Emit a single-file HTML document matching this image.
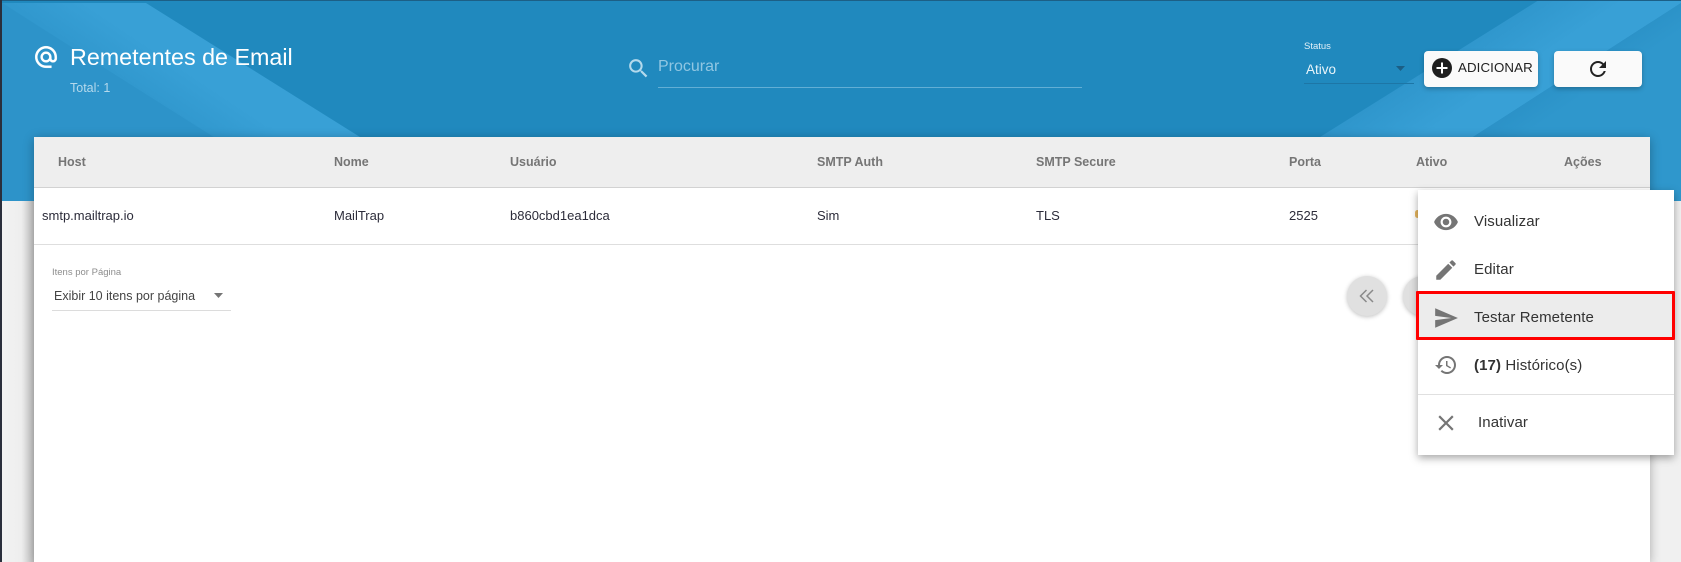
<!DOCTYPE html>
<html lang="pt"><head><meta charset="utf-8"><title>Remetentes de Email</title>
<style>
html,body{margin:0;padding:0;width:1681px;height:562px;overflow:hidden;background:#f0f0f0}
body{position:relative;font-family:"Liberation Sans",sans-serif;color:#333}
.t{position:absolute;white-space:nowrap;line-height:20px;height:20px}
.abs{position:absolute}
.th{font-size:12.5px;font-weight:700;color:#757575;top:152px}
.td{font-size:13px;color:#2c2c3a;top:206px}
.m{font-size:15px;color:#333;left:1474px;letter-spacing:.1px}
svg{position:absolute;display:block}
</style></head><body>
<svg style="left:0;top:0" width="1681" height="201" viewBox="0 0 1681 201">
<defs>
<linearGradient id="a" gradientUnits="userSpaceOnUse" x1="120" y1="85" x2="170" y2="10"><stop offset="0" stop-color="#3097cd"/><stop offset=".55" stop-color="#38a0d6"/><stop offset="1" stop-color="#38a0d6"/></linearGradient>
<linearGradient id="b" gradientUnits="userSpaceOnUse" x1="1420" y1="73" x2="1470" y2="148"><stop offset="0" stop-color="#2f96cc"/><stop offset=".6" stop-color="#38a0d6"/><stop offset="1" stop-color="#38a0d6"/></linearGradient>
<linearGradient id="c" gradientUnits="userSpaceOnUse" x1="1520" y1="95" x2="1560" y2="155"><stop offset="0" stop-color="#2a90c6"/><stop offset=".5" stop-color="#2f97cc"/></linearGradient>
</defs>
<rect width="1681" height="201" fill="#2089be"/>
<polygon points="0,0 0,201 320,201 2,3" fill="#2d93c9"/>
<polygon points="2,3 146,3 360,137 460,201 315,201" fill="url(#a)"/>
<polygon points="1539,0 1320,137 1217,201 1373,201 1473,137 1681,3 1681,0" fill="url(#b)"/>
<polygon points="1681,3 1473,137 1373,201 1681,201" fill="url(#c)"/>
<rect width="1681" height="1" fill="#1c5f86"/>
</svg>
<div class="abs" style="left:0;top:0;width:2px;height:562px;background:#2a2f3c"></div>
<div class="abs" style="left:2px;top:201px;width:32px;height:361px;background:linear-gradient(90deg,#f2f2f2 0,#eee 60%,#c4c4c4 100%)"></div>

<svg style="left:33px;top:44px" width="26" height="26" viewBox="0 0 24 24"><path fill="#fff" stroke="#fff" stroke-width=".3" d="M12 2C6.48 2 2 6.48 2 12s4.48 10 10 10h5v-2h-5c-4.34 0-8-3.66-8-8s3.66-8 8-8 8 3.66 8 8v1.43c0 .79-.71 1.57-1.5 1.57s-1.5-.78-1.5-1.57V12c0-2.76-2.24-5-5-5s-5 2.24-5 5 2.24 5 5 5c1.38 0 2.64-.56 3.54-1.47.65.89 1.77 1.47 2.96 1.47 1.97 0 3.5-1.6 3.5-3.57V12c0-5.52-4.48-10-10-10zm0 13c-1.66 0-3-1.34-3-3s1.34-3 3-3 3 1.34 3 3-1.34 3-3 3z"/></svg>
<div class="t" style="left:70px;top:47px;font-size:23.3px;color:#fff">Remetentes de Email</div>
<div class="t" style="left:70px;top:78px;font-size:12.5px;color:#b5d9ec">Total: 1</div>

<svg style="left:626px;top:56px" width="25" height="25" viewBox="0 0 24 24"><path fill="#b3d9ec" d="M15.5 14h-.79l-.28-.27C15.41 12.59 16 11.11 16 9.5 16 5.91 13.09 3 9.5 3S3 5.91 3 9.5 5.91 16 9.5 16c1.61 0 3.09-.59 4.23-1.57l.27.28v.79l5 4.99L20.49 19l-4.99-5zm-6 0C7.01 14 5 11.99 5 9.5S7.01 5 9.5 5 14 7.01 14 9.5 11.99 14 9.5 14z"/></svg>
<div class="t" style="left:658px;top:57px;font-size:16px;color:#90c6e2">Procurar</div>
<div class="abs" style="left:658px;top:87px;width:424px;height:1px;background:#62aed5"></div>

<div class="t" style="left:1304px;top:37px;font-size:9.5px;color:#e3f1f8">Status</div>
<div class="t" style="left:1306px;top:60px;font-size:13.5px;color:#eaf5fa">Ativo</div>
<svg style="left:1396px;top:66px" width="10" height="6" viewBox="0 0 10 6"><path fill="#1b5e85" d="M0 0h9L4.500 5z"/></svg>
<div class="abs" style="left:1304px;top:83px;width:110px;height:1px;background:#1d76a6"></div>

<div class="abs" style="left:1424px;top:51px;width:114px;height:36px;background:#fafafa;border-radius:4px;box-shadow:0 2px 5px rgba(0,0,0,.25)"></div>
<svg style="left:1432px;top:58px" width="20" height="20" viewBox="0 0 20 20"><circle cx="10" cy="10" r="10" fill="#1f1f1f"/><path fill="#fff" d="M9 4.500h2V9h4.500v2H11v4.500H9V11H4.500V9H9z"/></svg>
<div class="t" style="left:1458px;top:58px;font-size:13.3px;color:#222;letter-spacing:.1px">ADICIONAR</div>

<div class="abs" style="left:1554px;top:51px;width:88px;height:36px;background:#fafafa;border-radius:4px;box-shadow:0 2px 5px rgba(0,0,0,.25)"></div>
<svg style="left:1586px;top:57px" width="24" height="24" viewBox="0 0 24 24"><path fill="#222" d="M17.65 6.350C16.200 4.900 14.210 4 12 4c-4.420 0-7.990 3.580-7.990 8s3.570 8 7.990 8c3.730 0 6.840-2.550 7.730-6h-2.080c-.82 2.330-3.040 4-5.650 4-3.310 0-6-2.690-6-6s2.690-6 6-6c1.660 0 3.140.69 4.220 1.780L13 11h7V4l-2.350 2.350z"/></svg>

<div class="abs" style="left:34px;top:137px;width:1616px;height:425px;background:#fff;box-shadow:0 2px 10px rgba(0,0,0,.3)"></div>
<div class="abs" style="left:34px;top:137px;width:1616px;height:50px;background:#eee;border-bottom:1px solid #d2d2d2"></div>
<div class="t th" style="left:58px">Host</div>
<div class="t th" style="left:334px">Nome</div>
<div class="t th" style="left:510px">Usuário</div>
<div class="t th" style="left:817px">SMTP Auth</div>
<div class="t th" style="left:1036px">SMTP Secure</div>
<div class="t th" style="left:1289px">Porta</div>
<div class="t th" style="left:1416px">Ativo</div>
<div class="t th" style="left:1564px">Ações</div>

<div class="t td" style="left:42px">smtp.mailtrap.io</div>
<div class="t td" style="left:334px">MailTrap</div>
<div class="t td" style="left:510px">b860cbd1ea1dca</div>
<div class="t td" style="left:817px">Sim</div>
<div class="t td" style="left:1036px">TLS</div>
<div class="t td" style="left:1289px">2525</div>
<div class="abs" style="left:34px;top:244px;width:1616px;height:1px;background:#dedede"></div>

<div class="t" style="left:52px;top:263px;font-size:9.5px;color:#8d8d8d">Itens por Página</div>
<div class="t" style="left:54px;top:286px;font-size:12.5px;color:#444">Exibir 10 itens por página</div>
<svg style="left:214px;top:293px" width="10" height="6" viewBox="0 0 10 6"><path fill="#757575" d="M0 0h9L4.500 5z"/></svg>
<div class="abs" style="left:52px;top:310px;width:179px;height:1px;background:#dcdcdc"></div>

<div class="abs" style="left:1347px;top:276px;width:40px;height:40px;border-radius:50%;background:#e0e0e0;box-shadow:0 1px 4px rgba(0,0,0,.25)"></div>
<svg style="left:1359px;top:289px" width="16" height="14" viewBox="0 0 16 14"><path fill="none" stroke="#8a8a8a" stroke-width="1.500" d="M7.500 1 1.500 7l6 6M14 1 8 7l6 6"/></svg>
<div class="abs" style="left:1403px;top:276px;width:40px;height:40px;border-radius:50%;background:#e0e0e0;box-shadow:0 1px 4px rgba(0,0,0,.25)"></div>
<div class="abs" style="left:1415px;top:210px;width:5px;height:8px;background:#e8b860;border-radius:3px"></div>

<div class="abs" style="left:1418px;top:190px;width:256px;height:265px;background:#fff;box-shadow:0 3px 8px rgba(0,0,0,.35)"></div>
<div class="abs" style="left:1418px;top:293px;width:256px;height:46px;background:#ececec"></div>
<div class="abs" style="left:1416px;top:291px;width:253px;height:43px;border:3.500px solid #f00;border-radius:1px;box-sizing:content-box"></div>

<svg style="left:1433px;top:209px" width="26" height="26" viewBox="0 0 24 24"><path fill="#757575" d="M12 4.500C7 4.500 2.730 7.610 1 12c1.730 4.390 6 7.500 11 7.500s9.270-3.110 11-7.500c-1.730-4.390-6-7.500-11-7.500zM12 17c-2.760 0-5-2.240-5-5s2.240-5 5-5 5 2.240 5 5-2.240 5-5 5zm0-8c-1.660 0-3 1.340-3 3s1.340 3 3 3 3-1.340 3-3-1.340-3-3-3z"/></svg>
<div class="t m" style="top:212px">Visualizar</div>
<svg style="left:1433px;top:257px" width="26" height="26" viewBox="0 0 24 24"><path fill="#757575" d="M3 17.250V21h3.750L17.810 9.940l-3.750-3.750L3 17.250zM20.710 7.040c.39-.39.39-1.020 0-1.410l-2.340-2.340c-.39-.39-1.020-.39-1.410 0l-1.830 1.830 3.750 3.750 1.830-1.830z"/></svg>
<div class="t m" style="top:260px">Editar</div>
<svg style="left:1433px;top:305px" width="26" height="26" viewBox="0 0 24 24"><path fill="#757575" d="M2.010 21 23 12 2.010 3 2 10l15 2-15 2z"/></svg>
<div class="t m" style="top:308px">Testar Remetente</div>
<svg style="left:1434px;top:353px" width="24" height="24" viewBox="0 0 24 24"><path fill="#757575" d="M13 3c-4.970 0-9 4.030-9 9H1l3.890 3.890.07.14L9 12H6c0-3.870 3.130-7 7-7s7 3.130 7 7-3.130 7-7 7c-1.930 0-3.680-.79-4.940-2.060l-1.420 1.420C8.270 19.990 10.510 21 13 21c4.970 0 9-4.030 9-9s-4.030-9-9-9zm-1 5v5l4.280 2.540.72-1.210-3.500-2.080V8H12z"/></svg>
<div class="t m" style="top:356px"><b>(17)</b> Histórico(s)</div>
<div class="abs" style="left:1418px;top:394px;width:256px;height:1px;background:#e0e0e0"></div>
<svg style="left:1433px;top:410px" width="26" height="26" viewBox="0 0 24 24"><path fill="#757575" d="M19 6.410 17.590 5 12 10.590 6.410 5 5 6.410 10.590 12 5 17.590 6.410 19 12 13.410 17.590 19 19 17.590 13.410 12z"/></svg>
<div class="t m" style="left:1478px;top:413px">Inativar</div>
</body></html>
